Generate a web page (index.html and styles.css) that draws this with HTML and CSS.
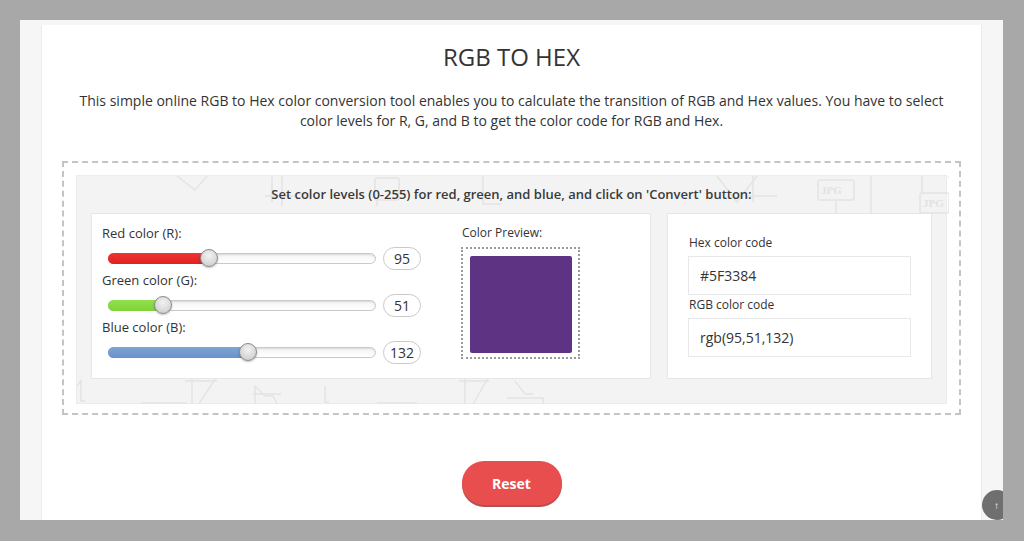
FILE: index.html
```html
<!DOCTYPE html>
<html lang="en">
<head>
<meta charset="utf-8">
<title>RGB to HEX</title>
<link rel="stylesheet" href="styles.css">
</head>
<body>
<div class="frame">
  <div class="page">
    <h1 class="title">RGB TO HEX</h1>
    <p class="intro">This simple online RGB to Hex color conversion tool enables you to calculate the transition of RGB and Hex values. You have to select color levels for R, G, and B to get the color code for RGB and Hex.</p>

    <div class="tool">
      <div class="panel">
        <svg class="pattern" width="872" height="228" viewBox="0 0 872 228" aria-hidden="true">
          <g fill="none" stroke="#e4e4e4" stroke-width="1.5">
            <path d="M100 0 L118 14 L130 0"/>
            <path d="M195 0 L195 26 M188 20 L218 20 M205 0 L205 30"/>
            <rect x="298" y="2" width="24" height="22" rx="2"/>
            <path d="M300 24 L300 30"/>
            <path d="M406 0 L406 28 L424 28"/>
            <path d="M640 0 L660 26 L680 0"/>
            <path d="M676 0 L676 26 M670 20 L700 20"/>
            <rect x="741" y="4" width="36" height="20" rx="2"/>
            <path d="M759 24 L759 38"/>
            <path d="M794 0 L794 40"/>
            <rect x="843" y="17" width="29" height="20" rx="2"/>
            <path d="M845 0 L845 17 M872 0 L872 2"/>
            <path d="M0 210 L4 205 L4 225 L8 225"/>
            <path d="M64 227 L110 227"/>
            <path d="M108 205 L140 205 M115 200 L115 228 M140 200 L122 228"/>
            <path d="M178 228 L178 210 L188 220 L196 220 L200 228 M176 218 L204 218"/>
            <path d="M248 210 L248 226 L252 226"/>
            <path d="M300 227 L340 227"/>
            <path d="M382 205 L412 205 M388 200 L388 228 M412 200 L396 228"/>
            <path d="M438 205 L448 218 L456 218 M430 222 L466 222 L466 228"/>
          </g>
          <g fill="#e2e2e2" font-family="'Liberation Serif', serif" font-weight="bold" font-size="11">
            <text x="744" y="18">JPG</text>
            <text x="846" y="31">JPG</text>
          </g>
        </svg>

        <div class="panel-head">Set color levels (0-255) for red, green, and blue, and click on 'Convert' button:</div>

        <div class="cards">
          <div class="card card-main">
            <div class="sliders">
              <div class="slider-block">
                <label class="slider-label">Red color (R):</label>
                <div class="slider-row">
                  <div class="track">
                    <div class="fill fill-red" style="width:100px"></div>
                    <div class="thumb" style="left:100px"></div>
                  </div>
                  <div class="value">95</div>
                </div>
              </div>
              <div class="slider-block">
                <label class="slider-label">Green color (G):</label>
                <div class="slider-row">
                  <div class="track">
                    <div class="fill fill-green" style="width:54px"></div>
                    <div class="thumb" style="left:54px"></div>
                  </div>
                  <div class="value">51</div>
                </div>
              </div>
              <div class="slider-block">
                <label class="slider-label">Blue color (B):</label>
                <div class="slider-row">
                  <div class="track">
                    <div class="fill fill-blue" style="width:139px"></div>
                    <div class="thumb" style="left:139px"></div>
                  </div>
                  <div class="value">132</div>
                </div>
              </div>
            </div>

            <div class="preview">
              <div class="preview-label">Color Preview:</div>
              <div class="preview-box">
                <div class="swatch" style="background:#5f3384"></div>
              </div>
            </div>
          </div>

          <div class="card card-codes">
            <div class="code-label">Hex color code</div>
            <div class="code-input">#5F3384</div>
            <div class="code-label code-label-2">RGB color code</div>
            <div class="code-input">rgb(95,51,132)</div>
          </div>
        </div>
      </div>
    </div>

    <div class="actions">
      <button class="reset" type="button">Reset</button>
    </div>
  </div>
  <div class="to-top">&#8593;</div>
</div>
</body>
</html>
```

FILE: styles.css
```css
* { box-sizing: border-box; }

html, body {
  margin: 0;
  padding: 0;
}

body {
  background: #a8a8a8;
  height: 541px;
  overflow: hidden;
  font-family: "Open Sans", "Liberation Sans", sans-serif;
  color: #333;
}

.frame {
  position: relative;
  margin: 20px 0 0 20px;
  width: 983px;
  height: 500px;
  background: #f6f6f6;
  padding: 5px 21px 0 21px;
  overflow: hidden;
}

.page {
  background: #fff;
  border-left: 1px solid #ececec;
  border-right: 1px solid #ececec;
  height: 520px;
  padding-top: 18px;
}

.title {
  margin: 0;
  text-align: center;
  font-size: 24px;
  font-weight: 400;
  line-height: 28px;
  color: #333;
}

.intro {
  margin: 20px auto 0 auto;
  max-width: 880px;
  text-align: center;
  font-size: 14px;
  line-height: 20px;
  color: #333;
}

.tool {
  margin: 30px 20px 0 20px;
  border: 2px dashed #c4c4c4;
  padding: 12px 12px 10px 12px;
  height: 254px;
}

.panel {
  position: relative;
  background: #f3f3f3;
  border: 1px solid #ececec;
  height: 229px;
  padding: 0 14px;
}

.pattern {
  position: absolute;
  left: 0;
  top: 0;
}

.panel-head {
  position: relative;
  text-align: center;
  font-size: 13px;
  line-height: 18px;
  padding-top: 9px;
  height: 37px;
  font-weight: 600;
  color: #3a3a3a;
}

.cards {
  position: relative;
  display: flex;
  gap: 16px;
}

.card {
  background: #fff;
  border: 1px solid #e6e6e6;
  height: 166px;
}

.card-main {
  width: 561px;
  display: flex;
  padding: 10px 0 0 10px;
}

.sliders {
  width: 320px;
}

.slider-block {
  height: 47px;
}

.slider-label {
  display: block;
  font-size: 13px;
  line-height: 18px;
  color: #333;
}

.slider-row {
  display: flex;
  align-items: center;
  margin-top: 5px;
  height: 22px;
}

.track {
  position: relative;
  margin-left: 6px;
  width: 268px;
  height: 11px;
  border: 1px solid #c9c9c9;
  border-radius: 6px;
  background: linear-gradient(#f4f4f4, #ffffff);
  box-shadow: inset 0 1px 2px rgba(0,0,0,0.12);
}

.fill {
  position: absolute;
  left: -1px;
  top: -1px;
  height: 11px;
  border-radius: 6px 0 0 6px;
}

.fill-red { background: linear-gradient(#ef3434, #df2020); }
.fill-green { background: linear-gradient(#92e04c, #7fd33a); }
.fill-blue { background: linear-gradient(#7ca4d6, #6892c8); }

.thumb {
  position: absolute;
  top: 50%;
  width: 18px;
  height: 18px;
  margin: -9px 0 0 -9px;
  border-radius: 50%;
  border: 1px solid #8a8a8a;
  background: radial-gradient(circle at 50% 35%, #f2f2f2 0%, #d9d9d9 60%, #c2c2c2 100%);
  box-shadow: 0 1px 2px rgba(0,0,0,0.25);
}

.value {
  margin-left: 7px;
  width: 38px;
  height: 23px;
  border: 1px solid #c9c9c9;
  border-radius: 12px;
  text-align: center;
  font-size: 14px;
  line-height: 21px;
  color: #333;
}

.preview {
  margin-left: 39px;
  padding-top: 1px;
}

.preview-label {
  font-size: 12px;
  line-height: 16px;
  margin-left: 1px;
  color: #333;
}

.preview-box {
  margin-top: 6px;
  width: 119px;
  height: 112px;
  border: 2px dotted #9a9a9a;
  padding: 7px 7px 4px 7px;
}

.swatch {
  width: 102px;
  height: 97px;
  border-radius: 2px;
}

.card-codes {
  width: 265px;
  padding: 20px 20px 0 20px;
}

.code-label {
  font-size: 12px;
  line-height: 17px;
  margin-left: 1px;
  color: #333;
}

.code-label-2 {
  margin-top: 1px;
}

.code-input {
  margin-top: 5px;
  width: 223px;
  height: 39px;
  border: 1px solid #e8e8e8;
  padding: 0 11px;
  font-size: 14px;
  line-height: 37px;
  color: #333;
}

.actions {
  display: flex;
  justify-content: center;
  margin-top: 46px;
}

.reset {
  width: 100px;
  height: 44px;
  border: none;
  border-radius: 22px;
  background: #e94e4e;
  box-shadow: 0 2px 0 #b55050;
  color: #fff;
  font-family: "Open Sans", "Liberation Sans", sans-serif;
  font-size: 14px;
  font-weight: 700;
  padding: 0;
}

.to-top {
  position: absolute;
  left: 962px;
  top: 470px;
  width: 30px;
  height: 30px;
  border-radius: 50%;
  background: #6f6f6f;
  color: #fff;
  font-size: 10px;
  font-weight: 700;
  line-height: 30px;
  text-align: center;
  padding-right: 1px;
}
```
